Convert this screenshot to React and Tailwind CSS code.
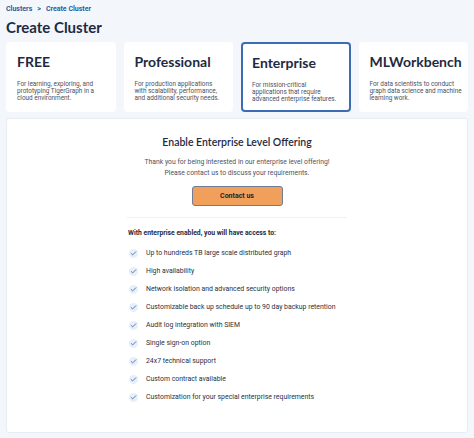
import { Check } from 'lucide-react';

const plans = [
  {
    name: 'FREE',
    desc: 'For learning, exploring, and prototyping TigerGraph in a cloud environment.',
    width: 'w-[88px]',
  },
  {
    name: 'Professional',
    desc: 'For production applications with scalability, performance, and additional security needs.',
    width: 'w-[88px]',
  },
  {
    name: 'Enterprise',
    desc: 'For mission-critical applications that require advanced enterprise features.',
    width: 'w-[88px]',
    active: true,
  },
  {
    name: 'MLWorkbench',
    desc: 'For data scientists to conduct graph data science and machine learning work.',
    width: 'w-[95px]',
  },
];

const features = [
  'Up to hundreds TB large scale distributed graph',
  'High availability',
  'Network isolation and advanced security options',
  'Customizable back up schedule up to 90 day backup retention',
  'Audit log integration with SIEM',
  'Single sign-on option',
  '24x7 technical support',
  'Custom contract available',
  'Customization for your special enterprise requirements',
];

const headFont = { fontFamily: 'Lato, "Noto Sans", sans-serif' };

export default function App() {
  return (
    <div
      className="w-[474px] h-[438px] bg-[#f3f6fa] px-[6px] pt-[5px] overflow-hidden"
      style={{ fontFamily: 'Roboto, "Liberation Sans", sans-serif' }}
    >
      {/* Breadcrumb */}
      <div className="flex items-center gap-[5px] text-[7px] font-bold text-[#2d5c9e] h-[9px]">
        <span>Clusters</span>
        <span>&gt;</span>
        <span>Create Cluster</span>
      </div>
      <h1
        className="text-[15px] font-bold text-[#1e2a42] leading-[20px] mt-[3px]"
        style={headFont}
      >
        Create Cluster
      </h1>

      {/* Plan cards */}
      <div className="grid grid-cols-4 gap-2 mt-[5px]">
        {plans.map((plan) => (
          <div
            key={plan.name}
            className={`h-[70px] rounded-[4px] bg-white ${
              plan.active
                ? 'border-2 border-[#3c6cb4] pl-[9px] pt-[11px]'
                : 'pl-[11px] pt-[12px]'
            }`}
          >
            <div
              className="text-[14px] font-bold text-[#1e2a42] leading-[16px]"
              style={headFont}
            >
              {plan.name}
            </div>
            <p className={`mt-[11px] ${plan.width} text-[6.4px] leading-[7px] text-[#4b5263]`}>
              {plan.desc}
            </p>
          </div>
        ))}
      </div>

      {/* Enterprise panel */}
      <div className="mt-[6px] h-[315px] bg-white rounded-[3px] border border-[#e8edf5] flex flex-col items-center">
        <h2
          className="mt-[16px] text-[10.5px] font-semibold text-[#1e2a42] leading-[14px]"
          style={headFont}
        >
          Enable Enterprise Level Offering
        </h2>
        <p className="mt-[8px] text-[6.8px] leading-[11px] text-[#4b5263] text-center">
          Thank you for being interested in our enterprise level offering!
          <br />
          Please contact us to discuss your requirements.
        </p>
        <button className="mt-[7px] w-[91px] h-[20px] rounded-[3px] bg-[#f1a05b] border border-[#6f7c98] text-[7px] font-bold text-[#1e2430]">
          Contact us
        </button>
        <div className="mt-[11px] w-[220px] border-t border-[#eef1f6]" />
        <div className="w-[220px] pl-[1px]">
          <div className="mt-[11px] text-[6.8px] font-bold text-[#1e2a42] leading-[9px]">
            With enterprise enabled, you will have access to:
          </div>
          <ul className="mt-[6px] flex flex-col">
            {features.map((f) => (
              <li key={f} className="flex items-center h-[18px]">
                <span className="w-[9px] h-[9px] rounded-full bg-[#e8eff9] flex items-center justify-center ml-[1px]">
                  <Check size={7} strokeWidth={3} className="text-[#3b6db5]" />
                </span>
                <span className="ml-[8px] text-[6.9px] text-[#2a3142]">{f}</span>
              </li>
            ))}
          </ul>
        </div>
      </div>
    </div>
  );
}
